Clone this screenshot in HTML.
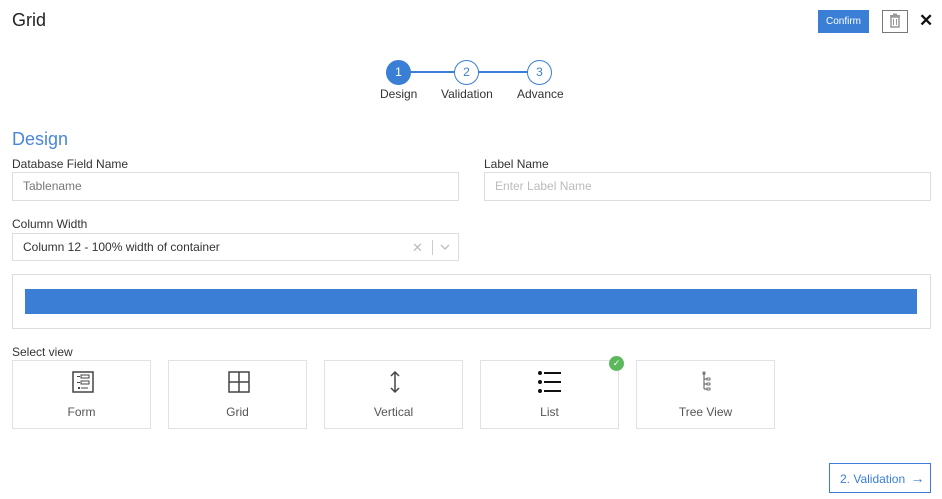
<!DOCTYPE html>
<html><head><style>
*{margin:0;padding:0;box-sizing:border-box}
body{width:942px;height:499px;background:#fff;font-family:"Liberation Sans",sans-serif;color:#333;position:relative;overflow:hidden}
.a{position:absolute}
.circ{position:absolute;width:25px;height:25px;border-radius:50%;border:1.5px solid #3a7fd5;color:#3a7fd5;font-size:12px;text-align:center;line-height:22px;background:#fff}
.lbl{position:absolute;font-size:12px;color:#333}
.inp{position:absolute;border:1px solid #ddd;height:29px;font-size:12px;padding:0 10px;line-height:27px}
.card{position:absolute;top:360px;width:139px;height:69px;border:1px solid #e2e2e2;text-align:center}
.card span{position:absolute;left:0;right:0;top:44px;font-size:12px;color:#555}
.card svg{position:absolute;left:58px;top:9px}
</style></head><body>
<div class="a" style="left:12px;top:10px;font-size:18px;color:#222">Grid</div>
<div class="a" style="left:818px;top:10px;width:51px;height:23px;background:#3a7fd5;color:#fff;font-size:10px;text-align:center;line-height:24px">Confirm</div>
<div class="a" style="left:882px;top:10px;width:26px;height:23px;border:1px solid #777">
<svg width="24" height="21" viewBox="0 0 24 21"><rect x="8" y="6" width="8" height="10" fill="none" stroke="#999" stroke-width="1.5"/><rect x="7" y="4" width="10" height="2" fill="#999"/><rect x="10" y="2.5" width="4" height="2" fill="#999"/><path d="M10.5 8v6M13.5 8v6" stroke="#999"/></svg></div>
<div class="a" style="left:919px;top:11px;font-size:17px;font-weight:bold;color:#111">✕</div>

<div class="a" style="left:398px;top:71px;width:141px;height:2px;background:#3a7fd5"></div>
<div class="circ" style="left:386px;top:60px;background:#3a7fd5;color:#fff">1</div>
<div class="circ" style="left:454px;top:60px">2</div>
<div class="circ" style="left:527px;top:60px">3</div>
<div class="lbl" style="left:380px;top:87px">Design</div>
<div class="lbl" style="left:441px;top:87px">Validation</div>
<div class="lbl" style="left:517px;top:87px">Advance</div>

<div class="a" style="left:12px;top:129px;font-size:18px;color:#4a86d8">Design</div>
<div class="lbl" style="left:12px;top:157px">Database Field Name</div>
<div class="inp" style="left:12px;top:172px;width:447px;color:#777">Tablename</div>
<div class="lbl" style="left:484px;top:157px">Label Name</div>
<div class="inp" style="left:484px;top:172px;width:447px;color:#bbb">Enter Label Name</div>
<div class="lbl" style="left:12px;top:217px">Column Width</div>
<div class="inp" style="left:12px;top:233px;width:447px;height:28px;color:#333">Column 12 - 100% width of container
<span class="a" style="left:399px;top:0;color:#bbb;font-size:13px">✕</span>
<span class="a" style="left:419px;top:6px;width:1px;height:15px;background:#ccc"></span>
<svg class="a" style="left:427px;top:10px" width="10" height="7"><path d="M1 1l4 4 4-4" stroke="#bbb" fill="none" stroke-width="1.3"/></svg></div>

<div class="a" style="left:12px;top:274px;width:919px;height:55px;border:1px solid #ddd"></div>
<div class="a" style="left:25px;top:289px;width:892px;height:25px;background:#3a7fd5"></div>

<div class="lbl" style="left:12px;top:345px">Select view</div>
<div class="card" style="left:12px"><svg width="24" height="24" viewBox="0 0 24 24"><rect x="2" y="2" width="20" height="20" fill="none" stroke="#444" stroke-width="1.5"/><rect x="10" y="5" width="8" height="3" fill="none" stroke="#444"/><rect x="10" y="11" width="8" height="3" fill="none" stroke="#444"/><path d="M6 6.5h3M6 12.5h3M10 18h7" stroke="#444"/><rect x="7" y="17" width="2" height="2" fill="#444"/></svg><span>Form</span></div>
<div class="card" style="left:168px"><svg width="24" height="24" viewBox="0 0 24 24"><rect x="2" y="2" width="20" height="20" fill="none" stroke="#444" stroke-width="1.5"/><path d="M12 2v20M2 12h20" stroke="#444" stroke-width="1.5"/></svg><span>Grid</span></div>
<div class="card" style="left:324px"><svg width="24" height="24" viewBox="0 0 24 24"><path d="M12 2v20M8 6l4-4 4 4M8 18l4 4 4-4" stroke="#444" stroke-width="1.5" fill="none"/></svg><span>Vertical</span></div>
<div class="card" style="left:480px"><svg width="28" height="24" viewBox="0 0 28 24" style="left:55px"><circle cx="4" cy="3" r="2" fill="#111"/><circle cx="4" cy="12" r="2" fill="#111"/><circle cx="4" cy="21" r="2" fill="#111"/><path d="M8 3h17M8 12h17M8 21h17" stroke="#111" stroke-width="2"/></svg><span>List</span></div>
<div class="a" style="left:609px;top:356px;width:15px;height:15px;border-radius:50%;background:#5cb85c;color:#fff;font-size:9px;text-align:center;line-height:15px">✓</div>
<div class="card" style="left:636px"><svg width="24" height="24" viewBox="0 0 24 24"><path d="M9 3v16M9 9h3M9 14h3M9 19h3" stroke="#555" stroke-width="1" fill="none"/><rect x="8" y="2" width="2" height="2" fill="none" stroke="#555" stroke-width=".8"/><rect x="12" y="8" width="3" height="2" fill="none" stroke="#555" stroke-width=".8"/><rect x="12" y="13" width="3" height="2" fill="none" stroke="#555" stroke-width=".8"/><rect x="12" y="18" width="3" height="2" fill="none" stroke="#555" stroke-width=".8"/></svg><span>Tree View</span></div>

<div class="a" style="left:829px;top:463px;width:102px;height:30px;border:1px solid #3a7fd5;color:#3a7fd5;font-size:12px;line-height:28px;padding-left:10px">2. Validation <span style="font-size:14px;font-weight:bold;margin-left:2px">→</span></div>
</body></html>
